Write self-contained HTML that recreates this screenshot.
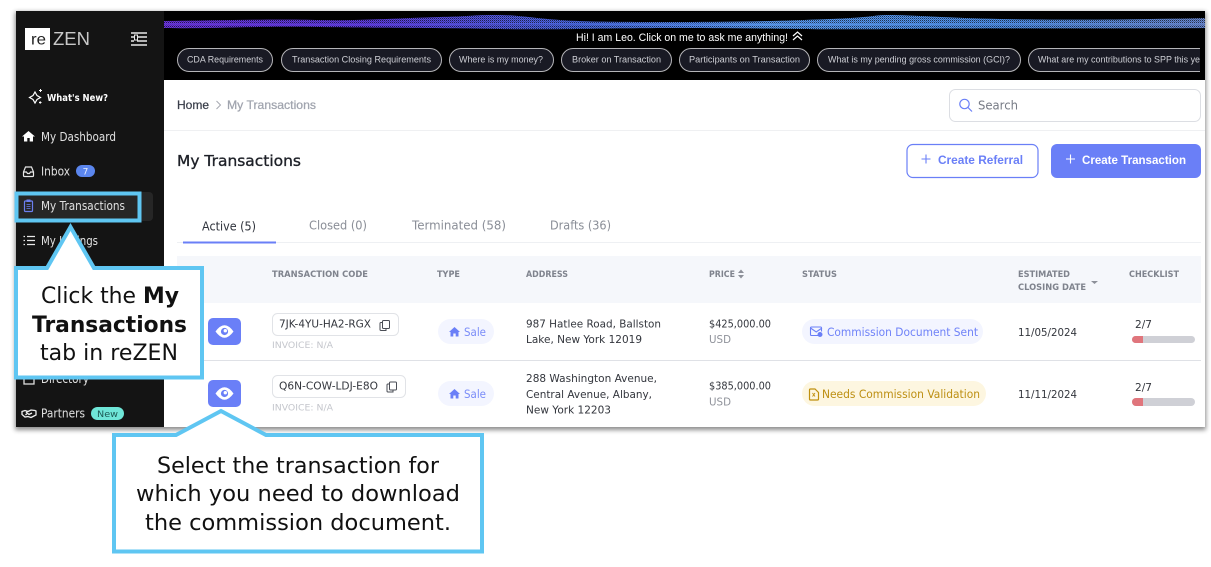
<!DOCTYPE html>
<html lang="en"><head><meta charset="utf-8"><title>My Transactions</title>
<style>
html,body{margin:0;padding:0;background:#fff;width:1211px;height:567px;overflow:hidden}
svg{display:block}
.o{font-family:"DejaVu Sans","Liberation Sans",sans-serif}
.d{font-family:"Liberation Sans",sans-serif}
text{white-space:pre}
</style></head><body>
<svg width="1211" height="567" viewBox="0 0 1211 567" xmlns="http://www.w3.org/2000/svg">
<defs>
<filter id="sh" x="-3%" y="-5%" width="106%" height="110%"><feGaussianBlur stdDeviation="2.5"/></filter>
<linearGradient id="wg" x1="0" x2="1" y1="0" y2="0"><stop offset="0" stop-color="#6a35dc"/><stop offset=".2" stop-color="#5f3fe0"/><stop offset=".4" stop-color="#4a6ae0"/><stop offset=".58" stop-color="#5a9af0"/><stop offset=".8" stop-color="#5090e8"/><stop offset="1" stop-color="#6a88d0"/></linearGradient>
<pattern id="dots" width="2" height="2" patternUnits="userSpaceOnUse"><rect width="1" height="1" fill="#000" opacity=".65"/><rect x="1" y="1" width="1" height="1" fill="#000" opacity=".3"/></pattern>
</defs>
<rect x="15" y="12" width="1191" height="418" fill="#000" opacity=".45" filter="url(#sh)"/>
<rect x="16" y="11" width="1189" height="416" fill="#fff"/>
<rect x="16" y="11" width="148" height="416" fill="#141414"/>
<rect x="164" y="11" width="1041" height="69" fill="#000"/>
<!-- wave -->
<path id="wv" d="M164 21C220 20 280 19 320 20S400 18 440 17S470 15 495 15S530 18 560 20S620 22 680 22S780 21 830 19S870 15 890 15S950 18 1000 19S1120 20 1205 18V28C1120 29 1000 28 900 29S760 28 680 28S560 30 500 29S400 28 320 27S220 29 164 28Z" fill="url(#wg)"/>
<path d="M164 21C220 20 280 19 320 20S400 18 440 17S470 15 495 15S530 18 560 20S620 22 680 22S780 21 830 19S870 15 890 15S950 18 1000 19S1120 20 1205 18V28C1120 29 1000 28 900 29S760 28 680 28S560 30 500 29S400 28 320 27S220 29 164 28Z" fill="url(#dots)"/>
<path d="M164 24C300 25 400 25 480 24S620 25 700 25S860 24 1000 24S1130 24 1205 24" fill="none" stroke="url(#wg)" stroke-width="1.500" opacity=".9"/>
<text x="576" y="41" class="d" font-size="11" fill="#fff" textLength="212" lengthAdjust="spacingAndGlyphs">Hi! I am Leo. Click on me to ask me anything!</text>
<path d="M793 36l4.500-4 4.500 4M793 40l4.500-4 4.500 4" fill="none" stroke="#fff" stroke-width="1.200"/>
<!-- chips -->
<g fill="#191a24" stroke="#b5b5b8" stroke-width="1">
<rect x="177.500" y="48.500" width="95" height="23" rx="11.500"/>
<rect x="281.500" y="48.500" width="160" height="23" rx="11.500"/>
<rect x="449.500" y="48.500" width="104" height="23" rx="11.500"/>
<rect x="561.500" y="48.500" width="110" height="23" rx="11.500"/>
<rect x="679.500" y="48.500" width="130" height="23" rx="11.500"/>
<rect x="817.500" y="48.500" width="203" height="23" rx="11.500"/>
<path d="M1200 48.500H1040a11.500 11.500 0 0 0 0 23H1200"/>
</g>
<g class="d" font-size="9" fill="#cfd0d6">
<text x="187" y="62.500" textLength="76" lengthAdjust="spacingAndGlyphs">CDA Requirements</text>
<text x="292" y="62.500" textLength="139" lengthAdjust="spacingAndGlyphs">Transaction Closing Requirements</text>
<text x="459" y="62.500" textLength="84" lengthAdjust="spacingAndGlyphs">Where is my money?</text>
<text x="572" y="62.500" textLength="89" lengthAdjust="spacingAndGlyphs">Broker on Transaction</text>
<text x="689" y="62.500" textLength="111" lengthAdjust="spacingAndGlyphs">Participants on Transaction</text>
<text x="828" y="62.500" textLength="182" lengthAdjust="spacingAndGlyphs">What is my pending gross commission (GCI)?</text>
<text x="1038" y="62.500" textLength="162" lengthAdjust="spacingAndGlyphs">What are my contributions to SPP this ye</text>
</g>
<!-- logo -->
<rect x="25" y="28" width="25" height="22" fill="#fff"/>
<text x="31" y="44.500" class="d" font-size="16" fill="#222" textLength="15" lengthAdjust="spacingAndGlyphs">re</text>
<text x="53" y="45" class="d" font-size="18" fill="#c8c8c8" textLength="37" lengthAdjust="spacingAndGlyphs">ZEN</text>
<g fill="none" stroke="#e8e8e8">
<path d="M131 33h16M131 37h3M137 37h10M131 41h3M137 41h10M131 45h16" stroke-width="1.500"/>
<rect x="134.500" y="35" width="3" height="5" stroke-width="1"/>
</g>
<!-- What's new -->
<path d="M35 92l2 3.500 3.500 2-3.500 2-2 3.500-2-3.500-3.500-2 3.500-2z" fill="none" stroke="#fff" stroke-width="1.200"/>
<path d="M39 90.500h3M40.500 89v3M39 102.500h2.500M40.200 101.200v2.500" stroke="#fff" stroke-width="1"/>
<text x="47" y="101" class="o" font-size="9.500" font-weight="700" fill="#fff" textLength="61" lengthAdjust="spacingAndGlyphs">What's New?</text>
<!-- sidebar -->
<rect x="16" y="192" width="137" height="29" rx="4" fill="#262626"/>
<g class="o" font-size="12" fill="#e0e0e0">
<text x="41" y="141" textLength="75" lengthAdjust="spacingAndGlyphs">My Dashboard</text>
<text x="41" y="175.500" textLength="29" lengthAdjust="spacingAndGlyphs">Inbox</text>
<text x="41" y="210" textLength="84" lengthAdjust="spacingAndGlyphs">My Transactions</text>
<text x="41" y="245" textLength="57" lengthAdjust="spacingAndGlyphs">My Listings</text>
<text x="41" y="383" textLength="48" lengthAdjust="spacingAndGlyphs">Directory</text>
<text x="41" y="417.500" textLength="44" lengthAdjust="spacingAndGlyphs">Partners</text>
</g>
<path d="M22 136.500l6.500-5.500 6.500 5.500h-2v5h-3.300v-3.500h-2.400v3.500H24v-5z" fill="#fff"/>
<path d="M23.500 172l2-5h6l2 5v3.500a1 1 0 0 1-1 1h-8a1 1 0 0 1-1-1zM23.500 172h3l1 1.500h2l1-1.500h3" fill="none" stroke="#e8e8e8" stroke-width="1.200"/>
<rect x="76" y="165" width="19" height="12" rx="6" fill="#5b86ee"/>
<text x="85.500" y="174.500" text-anchor="middle" class="o" font-size="9" fill="#e8efff">7</text>
<rect x="24.500" y="201" width="8" height="10.500" rx="1" fill="none" stroke="#6b7ff0" stroke-width="1.200"/>
<rect x="26.500" y="199.500" width="4" height="2.500" fill="#6b7ff0"/>
<path d="M26.500 204.500h4M26.500 206.500h4M26.500 208.500h4" stroke="#6b7ff0" stroke-width=".8"/>
<path d="M27 236.500h8M27 240.500h8M27 244.500h8M23.500 236.500h1.500M23.500 240.500h1.500M23.500 244.500h1.500" stroke="#e8e8e8" stroke-width="1.300"/>
<rect x="24" y="375" width="10" height="9" fill="none" stroke="#ddd" stroke-width="1.300"/>
<path d="M22 411.500l3-1 3 1 3-1.500 4 .5 1 .5v4l-2 1-3 1.500-3-1-3 .5-3-2.500zM26 412l3 2.500 3-1.500M25.500 415l2-2" fill="none" stroke="#eee" stroke-width="1.300"/>
<rect x="91" y="407" width="33" height="13" rx="6.500" fill="#6fe6d8"/>
<text x="107.500" y="417" text-anchor="middle" class="o" font-size="9" fill="#1d5a55" textLength="21" lengthAdjust="spacingAndGlyphs">New</text>
<!-- breadcrumb -->
<text x="177" y="109" class="d" font-size="12" fill="#3a3f4a" stroke="#3a3f4a" stroke-width=".25" textLength="32" lengthAdjust="spacingAndGlyphs">Home</text>
<path d="M216.500 101l4 4-4 4" fill="none" stroke="#a5a8b0" stroke-width="1"/>
<text x="227" y="109" class="d" font-size="12" fill="#a0a4ae" stroke="#a0a4ae" stroke-width=".25" textLength="89" lengthAdjust="spacingAndGlyphs">My Transactions</text>
<rect x="949.500" y="89.500" width="251" height="32" rx="6" fill="#fff" stroke="#dcdee3"/>
<circle cx="964.500" cy="104" r="4.700" fill="none" stroke="#6a7ff7" stroke-width="1.200"/><path d="M968 107.500l4 4" stroke="#6a7ff7" stroke-width="1.200"/>
<text x="978" y="109.500" class="o" font-size="12" fill="#777b85" textLength="40" lengthAdjust="spacingAndGlyphs">Search</text>
<rect x="164" y="130" width="1041" height="1" fill="#eff0f2"/>
<text x="177" y="166" class="o" font-size="15.500" fill="#1e2128" stroke="#1e2128" stroke-width=".35" textLength="124" lengthAdjust="spacingAndGlyphs">My Transactions</text>
<!-- buttons -->
<rect x="907" y="144.500" width="131" height="33" rx="6" fill="#fff" stroke="#6a7ff7" stroke-width="1.200"/>
<path d="M921.500 159h9M926 154.500v9" stroke="#6a7ff7" stroke-width="1.100"/>
<text x="938" y="164" class="d" font-size="12" font-weight="700" fill="#6a7ff7" textLength="85" lengthAdjust="spacingAndGlyphs">Create Referral</text>
<rect x="1051" y="144" width="150" height="34" rx="6" fill="#6a7ff7"/>
<path d="M1066 159h9M1070.500 154.500v9" stroke="#fff" stroke-width="1.100"/>
<text x="1082" y="164" class="d" font-size="12" font-weight="700" fill="#fff" textLength="104" lengthAdjust="spacingAndGlyphs">Create Transaction</text>
<!-- tabs -->
<g class="o" font-size="12.500">
<text x="202" y="230.500" fill="#2e323b" textLength="54" lengthAdjust="spacingAndGlyphs">Active (5)</text>
<text x="309" y="229.500" fill="#8a8e97" textLength="58" lengthAdjust="spacingAndGlyphs">Closed (0)</text>
<text x="412" y="229.500" fill="#8a8e97" textLength="94" lengthAdjust="spacingAndGlyphs">Terminated (58)</text>
<text x="550" y="229.500" fill="#8a8e97" textLength="61" lengthAdjust="spacingAndGlyphs">Drafts (36)</text>
</g>
<rect x="177" y="242" width="1024" height="1" fill="#eef0f3"/>
<rect x="183" y="241.500" width="93" height="2" fill="#6a7ff7"/>
<!-- table -->
<rect x="177" y="256" width="1024" height="47" fill="#f5f7fb"/>
<rect x="177" y="360" width="1024" height="1" fill="#dfe1e6"/>
<g class="o" font-size="9" font-weight="700" fill="#7f838d">
<text x="272" y="277" textLength="96" lengthAdjust="spacingAndGlyphs">TRANSACTION CODE</text>
<text x="437" y="277" textLength="23" lengthAdjust="spacingAndGlyphs">TYPE</text>
<text x="526" y="277" textLength="42" lengthAdjust="spacingAndGlyphs">ADDRESS</text>
<text x="709" y="277" textLength="26" lengthAdjust="spacingAndGlyphs">PRICE</text>
<text x="802" y="277" textLength="35" lengthAdjust="spacingAndGlyphs">STATUS</text>
<text x="1018" y="277" textLength="52" lengthAdjust="spacingAndGlyphs">ESTIMATED</text>
<text x="1018" y="290" textLength="68" lengthAdjust="spacingAndGlyphs">CLOSING DATE</text>
<text x="1129" y="277" textLength="50" lengthAdjust="spacingAndGlyphs">CHECKLIST</text>
</g>
<path d="M738 273l3-3.500 3 3.500zM738 275l3 3.500 3-3.500z" fill="#8d9099"/>
<path d="M1091 281h7l-3.500 3z" fill="#8d9099"/>
<!-- eye buttons -->
<rect x="208" y="318" width="33" height="27" rx="5" fill="#6a7ff7"/>
<rect x="208" y="380" width="33" height="27" rx="5" fill="#6a7ff7"/>
<path d="M215.500 331.500q9-12.500 18 0q-9 12.500-18 0z" fill="#fff"/><circle cx="224.500" cy="331.500" r="3.600" fill="#6a7ff7"/><circle cx="225.300" cy="330.700" r="1.700" fill="#fff"/>
<path d="M215.500 393.500q9-12.500 18 0q-9 12.500-18 0z" fill="#fff"/><circle cx="224.500" cy="393.500" r="3.600" fill="#6a7ff7"/><circle cx="225.300" cy="392.700" r="1.700" fill="#fff"/>
<!-- code pills -->
<rect x="272.500" y="313.500" width="126" height="22" rx="5" fill="#fff" stroke="#e1e3e7"/>
<rect x="272.500" y="375.500" width="133" height="22" rx="5" fill="#fff" stroke="#e1e3e7"/>
<g class="o" font-size="11" fill="#33363d">
<text x="279" y="327.500" textLength="92" lengthAdjust="spacingAndGlyphs">7JK-4YU-HA2-RGX</text>
<text x="279" y="389.500" textLength="99" lengthAdjust="spacingAndGlyphs">Q6N-COW-LDJ-E8O</text>
</g>
<g fill="none" stroke="#4a4d55" stroke-width="1">
<rect x="382.500" y="320.500" width="7" height="8" rx="1"/><path d="M382.500 322.500h-1.500a1 1 0 0 0-1 1v6a1 1 0 0 0 1 1h5v-2"/>
<rect x="389.500" y="382" width="7" height="8" rx="1"/><path d="M389.500 384h-1.500a1 1 0 0 0-1 1v6a1 1 0 0 0 1 1h5v-2"/>
</g>
<g class="o" font-size="9" fill="#c4c6cc">
<text x="272" y="348" textLength="61" lengthAdjust="spacingAndGlyphs">INVOICE: N/A</text>
<text x="272" y="410.500" textLength="61" lengthAdjust="spacingAndGlyphs">INVOICE: N/A</text>
</g>
<!-- sale pills -->
<rect x="438" y="319" width="56" height="25" rx="12.500" fill="#f3f5ff"/>
<rect x="438" y="381" width="56" height="25" rx="12.500" fill="#f3f5ff"/>
<path d="M449 332l5.500-5 5.500 5h-1.500v4.500h-2.800v-3h-2.400v3h-2.800V332z" fill="#6a7ff7"/>
<path d="M449 394l5.500-5 5.500 5h-1.500v4.500h-2.800v-3h-2.400v3h-2.800V394z" fill="#6a7ff7"/>
<g class="o" font-size="11.500" fill="#7a8cf8">
<text x="464" y="336" textLength="22" lengthAdjust="spacingAndGlyphs">Sale</text>
<text x="464" y="398" textLength="22" lengthAdjust="spacingAndGlyphs">Sale</text>
</g>
<!-- address -->
<g class="o" font-size="11" fill="#33363d">
<text x="526" y="327.500" textLength="135" lengthAdjust="spacingAndGlyphs">987 Hatlee Road, Ballston</text>
<text x="526" y="343" textLength="116" lengthAdjust="spacingAndGlyphs">Lake, New York 12019</text>
<text x="526" y="382" textLength="131" lengthAdjust="spacingAndGlyphs">288 Washington Avenue,</text>
<text x="526" y="398" textLength="126" lengthAdjust="spacingAndGlyphs">Central Avenue, Albany,</text>
<text x="526" y="413.500" textLength="85" lengthAdjust="spacingAndGlyphs">New York 12203</text>
<text x="709" y="327.500" textLength="62" lengthAdjust="spacingAndGlyphs">$425,000.00</text>
<text x="709" y="389.500" textLength="62" lengthAdjust="spacingAndGlyphs">$385,000.00</text>
<text x="1018" y="336" textLength="59" lengthAdjust="spacingAndGlyphs">11/05/2024</text>
<text x="1018" y="398" textLength="59" lengthAdjust="spacingAndGlyphs">11/11/2024</text>
<text x="1135" y="328" textLength="17" lengthAdjust="spacingAndGlyphs">2/7</text>
<text x="1135" y="391" textLength="17" lengthAdjust="spacingAndGlyphs">2/7</text>
</g>
<g class="o" font-size="11" fill="#8f929a">
<text x="709" y="343" textLength="22" lengthAdjust="spacingAndGlyphs">USD</text>
<text x="709" y="405.500" textLength="22" lengthAdjust="spacingAndGlyphs">USD</text>
</g>
<!-- status -->
<rect x="802" y="319" width="181" height="25" rx="12.500" fill="#f3f5ff"/>
<rect x="802" y="381" width="184" height="25" rx="12.500" fill="#fdf6e0"/>
<path d="M815 335.500h-3.500a1 1 0 0 1-1-1v-6.500a1 1 0 0 1 1-1h9a1 1 0 0 1 1 1v3.500M810.500 328l5.700 4 5.800-4M818 335.500h-3" fill="none" stroke="#6a7ff7" stroke-width="1.100"/><circle cx="820" cy="334.500" r="2.500" fill="#6a7ff7"/>
<text x="827" y="336" class="o" font-size="11.500" fill="#6f82f8" textLength="151" lengthAdjust="spacingAndGlyphs">Commission Document Sent</text>
<path d="M810.500 390a1 1 0 0 1 1-1h4.500l3.500 3.500v6.500a1 1 0 0 1-1 1h-7a1 1 0 0 1-1-1z" fill="none" stroke="#c0900f" stroke-width="1.200" transform="translate(-1 0)"/>
<path d="M812.500 393l2.500 3.500M815 393l-2.500 3.500" stroke="#c0900f" stroke-width=".9"/>
<text x="822" y="398" class="o" font-size="11.500" fill="#bd8f12" textLength="158" lengthAdjust="spacingAndGlyphs">Needs Commission Validation</text>
<!-- progress -->
<rect x="1132" y="336" width="63" height="7" rx="3.500" fill="#cfd0d6"/>
<path d="M1135.500 336h7.500v7h-7.500a3.500 3.500 0 0 1 0-7z" fill="#e0757c"/>
<rect x="1132" y="398" width="63" height="8" rx="4" fill="#cfd0d6"/>
<path d="M1136 398h7v8h-7a4 4 0 0 1 0-8z" fill="#e0757c"/>
<!-- highlight -->
<rect x="16.500" y="193.500" width="123" height="27" fill="none" stroke="#5fc6f2" stroke-width="4"/>
<!-- callout 1 -->
<path d="M16 268H47L70.500 227 94 268H202V377.500H16Z" fill="#fff" stroke="#5fc6f2" stroke-width="4"/>
<g class="o" font-size="22" fill="#111">
<text x="41" y="303" textLength="138" lengthAdjust="spacingAndGlyphs">Click the <tspan font-weight="700">My</tspan></text>
<text x="32" y="332" font-weight="700" textLength="155" lengthAdjust="spacingAndGlyphs">Transactions</text>
<text x="40" y="360" textLength="138" lengthAdjust="spacingAndGlyphs">tab in reZEN</text>
</g>
<!-- callout 2 -->
<path d="M114 435H176L221 411 266 435H482V551.500H114Z" fill="#fff" stroke="#5fc6f2" stroke-width="4"/>
<g class="o" font-size="22" fill="#111">
<text x="157" y="473" textLength="282" lengthAdjust="spacingAndGlyphs">Select the transaction for</text>
<text x="136" y="501" textLength="324" lengthAdjust="spacingAndGlyphs">which you need to download</text>
<text x="145" y="530" textLength="306" lengthAdjust="spacingAndGlyphs">the commission document.</text>
</g>
</svg>
</body></html>
